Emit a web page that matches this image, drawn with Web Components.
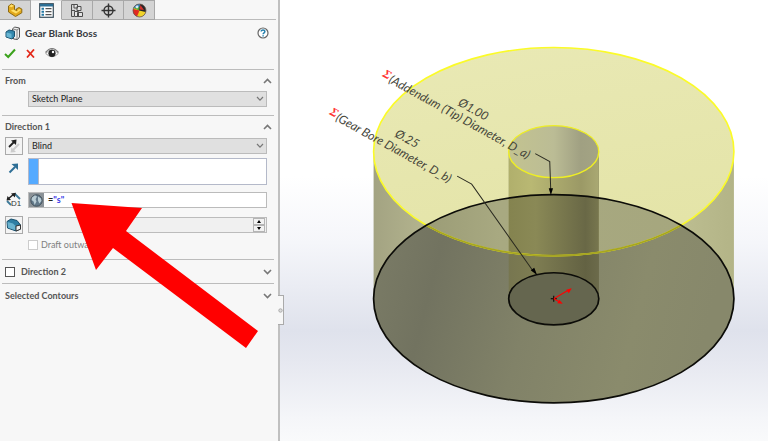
<!DOCTYPE html>
<html lang="en">
<head>
<meta charset="utf-8">
<title>Gear Blank Boss</title>
<style>
html,body{margin:0;height:100%}
body{font-family:Lato,"Open Sans",sans-serif;font-size:9px;line-height:12px;color:#333}
</style>
</head>
<body>
<cad-app></cad-app>

<template id="t-app">
<style>
:host{display:flex;min-height:100vh;position:relative;overflow:hidden}
property-panel{flex:0 0 auto;width:clamp(240px,36.4vw,420px);box-sizing:border-box}
model-view{flex:1;min-width:0}
callout-arrow{position:absolute;left:71px;top:203px}
</style>
<property-panel></property-panel>
<model-view></model-view>
<callout-arrow></callout-arrow>
</template>

<template id="t-panel">
<style>
:host{display:flex;flex-direction:column;background:#f7f7f7;border-right:2px solid #c0c0c0;position:relative}
.body{padding:0 4px 0 2px}
.row{display:grid;grid-template-columns:18px minmax(0,1fr);column-gap:5px;align-items:center;padding:0 7px 0 3px}
.row>svg{justify-self:center}
.stack{display:flex;flex-direction:column;padding-bottom:8px}
.last{padding-bottom:8px}
.sq{width:18px;height:18px;padding:0;box-sizing:border-box;border:1px solid #aaa;background:#f4f4f4;display:grid;place-items:center}
.list{display:flex;height:27px;box-sizing:border-box;border:1px solid #b4b9c9;background:#fff}
.list i{width:9px;background:#55aaff;border-right:1px solid #b4b9c9}
.field{display:flex;align-items:center;height:16px;box-sizing:border-box;border:1px solid #bbb;background:#fff}
.field input{flex:1;min-width:0;height:12px;padding:0;border:0;outline:0;background:none;font:inherit;font-weight:700;color:#3a3ae8}
.field .eq{margin-left:4px;color:#222;font-weight:700}
.globe{width:15px;height:14px;background:#8b9297;display:grid;place-items:center;padding:0;border:0}
.off{background:#f0f0f0;border-color:#bcbcbc}
.spin{display:flex;flex-direction:column;padding-right:1px}
.spin button{width:12px;height:7px;padding:0;box-sizing:border-box;border:1px solid #b5b5b5;background:#f2f2f2;display:grid;place-items:center}
.check{display:flex;align-items:center;gap:3px;color:#808080;grid-column:2}
.check input{appearance:none;box-sizing:border-box;width:10px;height:10px;margin:0;border:1px solid #ccc;background:#fff}
.handle{position:absolute;left:100%;top:295px;width:6px;height:30px;box-sizing:border-box;padding:0;border:1px solid #aaa;border-left:0;background:#f7f7f7;display:grid;place-items:center}
.g3{margin-top:3px}.g5{margin-top:5px}.g8{margin-top:8px}.g7{margin-top:7px}
</style>
<tab-strip></tab-strip>
<panel-title>Gear Blank Boss</panel-title>
<div class="body">
<panel-section open>
  <span slot="title">From</span>
  <div class="row last"><span></span><drop-down label="From" value="Sketch Plane"></drop-down></div>
</panel-section>
<panel-section open>
  <span slot="title">Direction 1</span>
  <div class="stack">
    <div class="row">
      <button class="sq" aria-label="Reverse direction"><svg width="16" height="16" viewBox="0 0 16 16"><path d="M13 6 L7 12" stroke="#ccc" stroke-width="2"/><path d="M4.500 14.500 L5.500 9.500 L10 14Z" fill="#ccc"/><path d="M3 9 L8 4" stroke="#222" stroke-width="1.800"/><path d="M10.500 1.500 L10 7 L5 2.500Z" fill="#222"/></svg></button>
      <drop-down label="End condition" value="Blind"></drop-down>
    </div>
    <div class="row g3">
      <svg width="12" height="18" viewBox="0 0 12 18"><path d="M1.500 9.500 L7 4" stroke="#2f6f96" stroke-width="1.900"/><path d="M10 .5 V7 L3.500 1Z" fill="#2f6f96"/></svg>
      <div class="list" role="listbox" aria-label="Direction of extrusion"><i></i></div>
    </div>
    <div class="row g7">
      <svg width="16" height="16" viewBox="0 0 16 16"><path d="M1 9 L5 13 M8.500 1.500 L14 7" stroke="#3e7a99" stroke-width="1.800" fill="none"/><path d="M2 7 L8 2" stroke="#222" stroke-width="1.600"/><path d="M.5 8.500 L1.500 4 L5 8Z M9.800 .8 L8.800 5.500 L5 1.500Z" fill="#222"/><text x="5" y="14" font-family="Liberation Sans" font-size="8" fill="#333">D1</text></svg>
      <div class="field"><button class="globe" aria-label="Equation"><svg width="13" height="13" viewBox="0 0 13 13"><circle cx="6.500" cy="6.500" r="5.700" fill="#62798a" stroke="#44525c"/><path d="M2 3.500 L5 1.300 L7 2.600 L5.600 5.200 L6.500 7.500 L4.600 11 L3.600 7.500 L1.500 6Z M8 2.400 L11 4.500 L11.500 7 L9.300 9.500 L8 6.400Z" fill="#b9ccd4"/></svg></button><span class="eq">=</span><input aria-label="Depth" value='"s"'></div>
    </div>
    <div class="row g8">
      <button class="sq" aria-label="Draft on/off"><svg width="16" height="16" viewBox="0 0 16 16"><path d="M1 4.500 L5 2 L11 3.500 L14.500 8 V12 L10 14 L1.500 11Z" fill="#2f7ea3" stroke="#174e6b"/><path d="M1.500 5 L7 6.500 L9.500 9 V13.300 L2 10.700Z" fill="#6bb4d0"/><path d="M10 9 L14.500 8 V12.200 L10 14Z" fill="#eee" stroke="#333"/></svg></button>
      <div class="field off"><input aria-label="Draft angle" disabled><span class="spin"><button aria-label="Increase"><svg width="4" height="3" viewBox="0 0 4 3"><path d="M0 3 L2 0 L4 3Z"/></svg></button><button aria-label="Decrease"><svg width="4" height="3" viewBox="0 0 4 3"><path d="M0 0 L2 3 L4 0Z"/></svg></button></span></div>
    </div>
    <div class="row g5"><label class="check"><input type="checkbox" disabled>Draft outward</label></div>
  </div>
</panel-section>
<panel-section checkable><span slot="title">Direction 2</span></panel-section>
<panel-section><span slot="title">Selected Contours</span></panel-section>
</div>
<button class="handle" aria-label="Collapse panel"><svg width="5" height="5" viewBox="0 0 5 5"><circle cx="2.500" cy="2.500" r="1.700" fill="#ddd" stroke="#aaa"/></svg></button>
</template>

<template id="t-tabs">
<style>
:host{display:flex;height:20px;box-sizing:border-box;align-items:stretch}
button{width:31px;padding:0;box-sizing:border-box;border:1px solid #a8a8a8;border-left-width:0;background:#d4d4d4;display:grid;place-items:center}
button[aria-selected=true]{background:#f7f7f7;border-bottom-color:#f7f7f7;border-top-color:#ddd}
i{flex:1;border-bottom:1px solid #bbb;box-sizing:border-box;margin-right:2px}
nav{display:flex}
</style>
<nav role="tablist">
<button role="tab" aria-label="Feature tree"><svg width="16" height="15" viewBox="0 0 16 15"><path d="M1.500 3 L4.500 1 L7.500 2.500 V6.500 L9.500 7.500 V5.800 L12 4.500 L14.800 6 V9.800 L8.500 13.500 L1.500 9Z" fill="#e3a91c" stroke="#8d6a12"/><path d="M2 3.200 L4.500 1.600 L7 2.800 L4.500 4.300Z M3.800 7.800 L6.300 6.500 L10 8.500 L12 6 L14 7 L9 10.500Z" fill="#ffe06a"/></svg></button>
<button role="tab" aria-selected="true" aria-label="Properties"><svg width="15" height="15" viewBox="0 0 15 15"><rect x=".7" y=".7" width="13.600" height="13.600" fill="#fff" stroke="#3b4f5c" stroke-width="1.200"/><rect x="1" y="1" width="13" height="2.500" fill="#2c6e94"/><path d="M2.500 5.700 H5 M2.500 8.700 H5 M2.500 11.700 H5" stroke="#2478a3" stroke-width="2"/><path d="M6.500 5.700 H12.500 M6.500 8.700 H12.500 M6.500 11.700 H12.500" stroke="#555" stroke-width="1.300"/></svg></button>
<button role="tab" aria-label="Configurations"><svg width="14" height="15" viewBox="0 0 14 15" fill="#e4e4e4" stroke="#4d4d4d"><path d="M4 1.500 H1.500 V13.500 H4 M1.500 7.500 H5" fill="none"/><path d="M4 1.500 H7.500 V5 H4Z M7 3.500 H11 V7.500 H7Z"/><path d="M4.500 8.500 H8.500 V13.500 H4.500Z M7.500 9.500 H12.500 V13.500 H7.500Z"/></svg></button>
<button role="tab" aria-label="Dimensions"><svg width="15" height="15" viewBox="0 0 15 15" fill="none" stroke="#333" stroke-width="1.400"><circle cx="7.500" cy="7.500" r="4.500"/><path d="M7.500 .5 V14.500 M.5 7.500 H14.500"/></svg></button>
<button role="tab" aria-label="Display"><svg width="15" height="15" viewBox="0 0 15 15"><circle cx="7.500" cy="7.500" r="6.500" fill="#e8c81c"/><path d="M7.500 7.500 L1.500 5 A6.500 6.500 0 0 1 8.500 1Z" fill="#43a63a"/><path d="M1.500 5 A6.500 6.500 0 0 1 8.500 1 L7 4Z" fill="#3f86d0"/><path d="M7.500 7.500 L1.200 6 A6.500 6.500 0 0 0 5 13.500Z" fill="#e02a22"/><path d="M7.500 7.500 L7.500 14 A6.500 6.500 0 0 0 13.500 9Z" fill="#f0d32a"/><path d="M7 7.500 L8 1 A6.500 6.500 0 0 1 13.700 9Z" fill="#26262a"/><path d="M7.500 6.500 L8.500 2 L12 7Z" fill="#d2342c"/><circle cx="5" cy="4" r="1.400" fill="#fff" opacity=".8"/><circle cx="7.500" cy="7.500" r="6.500" fill="none" stroke="#655" stroke-width=".8"/></svg></button>
</nav><i></i>
</template>

<template id="t-title">
<style>
:host{display:block}
header{display:flex;align-items:center;gap:4px;padding:5px 9px 0 5px;height:16px}
h1{flex:1;margin:0;font-size:10px;line-height:14px;font-weight:700;color:#383b42}
button{border:0;padding:0;background:none;display:grid;place-items:center}
div{display:flex;align-items:center;height:14px;padding:5px 0 9px 4px;gap:10px}
</style>
<header>
<svg width="16" height="15" viewBox="0 0 16 15"><path d="M7.500 3 L9.500 1 L14.500 2 V11 L12.500 13.500 L8.500 13Z" fill="#eee" stroke="#555"/><path d="M12 4 V13 M8 3 L12 4 L14 2.500" stroke="#888" fill="none"/><path d="M1 6 L4 4 L9.500 5.200 V10.500 L7 13 L1 11Z" fill="#3488ad" stroke="#1d536f"/><path d="M1.500 6.500 L6.500 7.700 V12.300 L1.500 10.700Z" fill="#68b5d2"/></svg>
<h1><slot></slot></h1>
<button aria-label="Help"><svg width="12" height="12" viewBox="0 0 12 12"><circle cx="6" cy="6" r="5" fill="#fff" stroke="#666" stroke-width="1.200"/><path d="M4.200 4.600 C4.200 2.400 7.900 2.500 7.900 4.600 C7.900 5.900 6.100 5.900 6.100 7.300 M6.100 8.300 V9.500" fill="none" stroke="#2580ad" stroke-width="1.500"/></svg></button>
</header>
<div>
<button aria-label="OK"><svg width="12" height="11" viewBox="0 0 12 11"><path d="M1 6 L4.200 9 L11 1.500" fill="none" stroke="#3ba21c" stroke-width="2"/></svg></button>
<button aria-label="Cancel"><svg width="9" height="9" viewBox="0 0 9 9"><path d="M1 1 L8 8.500 M8 .5 L1 8.500" stroke="#e3291a" stroke-width="1.800"/></svg></button>
<button aria-label="Preview"><svg width="14" height="12" viewBox="0 0 14 12"><path d="M.7 6.500 Q7 -1 13.300 6.500 Q7 13 .7 6.500Z" fill="#fff" stroke="#999"/><path d="M.5 5.500 Q7 -2.500 13.500 5.500" fill="none" stroke="#777" stroke-width="1.200"/><circle cx="7" cy="6.300" r="3.600" fill="#222"/><circle cx="8" cy="5" r="1.200" fill="#fff"/></svg></button>
</div>
</template>

<template id="t-section">
<style>
:host{display:block;border-top:1px solid #bcbcbc}
header{display:flex;align-items:center;box-sizing:border-box;height:23px;padding:0 2px 0 3px}
:host([checkable]) header{gap:6px}
h2{flex:1;margin:0;font-size:9px;line-height:12px;font-weight:700;color:#555}
header input{appearance:none;box-sizing:border-box;width:10px;height:10px;margin:0;border:1px solid #555;background:#fff}
button{border:0;padding:0;background:none;display:grid}
:host([open]) header{height:21px}
:host([open]) svg{transform:rotate(180deg)}
</style>
<header><h2><slot name="title"></slot></h2><button aria-label="Toggle section"><svg width="9" height="6" viewBox="0 0 9 6"><path d="M1 1 L4.500 4.500 L8 1" fill="none" stroke="#777" stroke-width="1.600"/></svg></button></header>
<slot></slot>
</template>

<template id="t-drop">
<style>
:host{display:grid;align-items:center}
select{grid-area:1/1;appearance:none;width:100%;height:16px;box-sizing:border-box;margin:0;padding:0 14px 0 3px;border:1px solid #bbb;border-radius:0;background:#e0e0e0;font:inherit;line-height:14px;color:#222}
svg{grid-area:1/1;justify-self:end;margin-right:3px;pointer-events:none}
</style>
<select><option></option></select>
<svg width="8" height="6" viewBox="0 0 8 6"><path d="M1 1 L4 4.200 L7 1" fill="none" stroke="#777" stroke-width="1.200"/></svg>
</template>

<template id="t-arrow">
<style>:host{display:block;pointer-events:none}svg{display:block}</style>
<svg width="188" height="146" viewBox="0 0 188 146"><path d="M.5 0 L71 5 L55 28 L187 128 L175 145 L42 45 L25 67Z" fill="#f00"/></svg>
</template>

<template id="t-model">
<style>
:host{display:flex;background:linear-gradient(#fff 0%,#fff 40%,#f5f6fa 55%,#dfe2ec 75%,#e6e8f0 82%,#f5f6f9 95%,#f9fafb 100%)}
svg{flex:1;width:100%;min-width:0}
text{font-family:Lato,"Open Sans",sans-serif;font-style:italic;font-size:12px;fill:#45453a}
.s{fill:#f33;font-family:"Liberation Serif",serif;font-weight:700}
</style>
<svg viewBox="280 0 488 441" role="img" aria-label="Extruded gear blank preview">
<defs>
<linearGradient id="side"><stop offset="0" stop-color="#a3a382"/><stop offset=".2" stop-color="#babb93"/><stop offset=".8" stop-color="#c0c194"/><stop offset="1" stop-color="#b3b487"/></linearGradient>
<linearGradient id="base" x2="1" y2=".15"><stop offset="0" stop-color="#7c7d67"/><stop offset=".22" stop-color="#727360"/><stop offset=".5" stop-color="#818268"/><stop offset=".8" stop-color="#8a8b6c"/><stop offset="1" stop-color="#87886b"/></linearGradient>
<linearGradient id="lens"><stop offset="0" stop-color="#92936f"/><stop offset=".35" stop-color="#a8a981"/><stop offset="1" stop-color="#a5a67d"/></linearGradient>
<linearGradient id="b1"><stop offset="0" stop-color="#b0af6c"/><stop offset=".25" stop-color="#b9b873"/><stop offset=".8" stop-color="#9b9966"/><stop offset="1" stop-color="#aaa973"/></linearGradient>
<linearGradient id="b2"><stop offset="0" stop-color="#84834f"/><stop offset=".3" stop-color="#8a8956"/><stop offset=".85" stop-color="#696846"/><stop offset="1" stop-color="#78774f"/></linearGradient>
<linearGradient id="b3"><stop offset="0" stop-color="#777650"/><stop offset=".3" stop-color="#7e7d52"/><stop offset=".85" stop-color="#636243"/><stop offset="1" stop-color="#6c6b4b"/></linearGradient>
<linearGradient id="hole"><stop offset="0" stop-color="#c3c390"/><stop offset=".5" stop-color="#bbbc95"/><stop offset=".8" stop-color="#a0a082"/><stop offset="1" stop-color="#a4a484"/></linearGradient>
<linearGradient id="top" x2=".3" y2="1"><stop offset="0" stop-color="#e9e9b5"/><stop offset="1" stop-color="#e4e4a8"/></linearGradient>
<clipPath id="cb"><ellipse cx="553.500" cy="298.500" rx="180" ry="104"/></clipPath>
<clipPath id="ct"><ellipse cx="553.500" cy="151.500" rx="180" ry="104"/></clipPath>
<clipPath id="cc"><path d="M508.500 151.500 A45 26 0 0 0 598.500 151.500 V298.500 A45 26 0 0 0 508.500 298.500Z"/></clipPath>
</defs>
<path d="M373.500 151.500 V298.500 A180 104 0 0 0 733.500 298.500 V151.500Z" fill="url(#side)"/>
<ellipse cx="553.500" cy="298.500" rx="180" ry="104" fill="url(#base)"/>
<ellipse cx="553.500" cy="151.500" rx="180" ry="104" fill="url(#top)"/>
<g clip-path="url(#ct)"><ellipse cx="553.500" cy="298.500" rx="180" ry="104" fill="url(#lens)"/></g>
<g clip-path="url(#cc)"><rect x="508" y="150" width="91" height="150" fill="url(#b3)"/><g clip-path="url(#ct)"><rect x="508" y="150" width="91" height="150" fill="url(#b1)"/></g><g clip-path="url(#cb)"><rect x="508" y="190" width="91" height="65" fill="url(#b2)"/><rect x="508" y="254" width="91" height="46" fill="url(#b3)"/></g></g>
<ellipse cx="553.500" cy="151.500" rx="180" ry="104" fill="none" stroke="#fbfb28" stroke-width="1.600"/>
<g clip-path="url(#cb)"><ellipse cx="553.500" cy="151.500" rx="180" ry="104" fill="none" stroke="#a6a522" stroke-width="1.800"/></g>
<ellipse cx="553.500" cy="151.500" rx="45" ry="26" fill="url(#hole)" stroke="#eeee24" stroke-width="1.400"/>
<ellipse cx="553.500" cy="298.500" rx="180" ry="104" fill="none" stroke="#0c0c08" stroke-width="1.700"/>
<ellipse cx="553.500" cy="298.500" rx="45" ry="26" fill="#65664f" stroke="#0c0c08" stroke-width="1.700"/>
<path d="M535 153.500 L549.500 161.500 L550.500 190" fill="none" stroke="#2a2a20"/><path d="M548.500 188 H552.800 L550.600 195Z"/>
<path d="M457 176 L471.500 184 L533 271" fill="none" stroke="#2a2a20"/><path d="M530.500 270 L534 267.500 L537 275Z"/>
<path d="M550.500 298.500 H556.500 M553.500 295.500 V301.500" stroke="#000"/>
<path d="M553.500 298.500 L567 290.500 M553.500 298.500 L559 301.500" stroke="#f00"/><path d="M571.500 288 L568.500 293 L566 289.500Z M562.500 303.500 L557 303 L559 299.500Z" fill="#f00"/>
<g transform="translate(382 76) rotate(29)"><text class="s">Σ</text></g>
<g transform="translate(388 82) rotate(29)"><text>(Addendum (Tip) Diameter, D_a)</text></g>
<g transform="translate(457 105) rotate(29)"><text>Ø1.00</text></g>
<g transform="translate(329 114) rotate(29)"><text class="s">Σ</text></g>
<g transform="translate(335 120) rotate(29)"><text>(Gear Bore Diameter, D_b)</text></g>
<g transform="translate(394 136) rotate(29)"><text>Ø.25</text></g>
</svg>
</template>

<script>
class Base extends HTMLElement {
  constructor() {
    super();
    this.attachShadow({mode: 'open'}).append(document.getElementById(this.constructor.tpl).content.cloneNode(true));
  }
}
customElements.define('tab-strip', class extends Base { static tpl = 't-tabs'; });
customElements.define('panel-title', class extends Base { static tpl = 't-title'; });
customElements.define('panel-section', class extends Base {
  static tpl = 't-section';
  connectedCallback() {
    const header = this.shadowRoot.querySelector('header');
    if (this.hasAttribute('checkable') && !header.querySelector('input')) {
      const box = document.createElement('input');
      box.type = 'checkbox';
      box.setAttribute('aria-label', this.textContent.trim());
      header.prepend(box);
    }
    header.querySelector('button').onclick = () => this.toggleAttribute('open');
  }
});
customElements.define('drop-down', class extends Base {
  static tpl = 't-drop';
  connectedCallback() {
    this.shadowRoot.querySelector('option').textContent = this.getAttribute('value');
    this.shadowRoot.querySelector('select').setAttribute('aria-label', this.getAttribute('label'));
  }
});
customElements.define('callout-arrow', class extends Base { static tpl = 't-arrow'; });
customElements.define('model-view', class extends Base { static tpl = 't-model'; });
customElements.define('property-panel', class extends Base { static tpl = 't-panel'; });
customElements.define('cad-app', class extends Base { static tpl = 't-app'; });
</script>
</body>
</html>
